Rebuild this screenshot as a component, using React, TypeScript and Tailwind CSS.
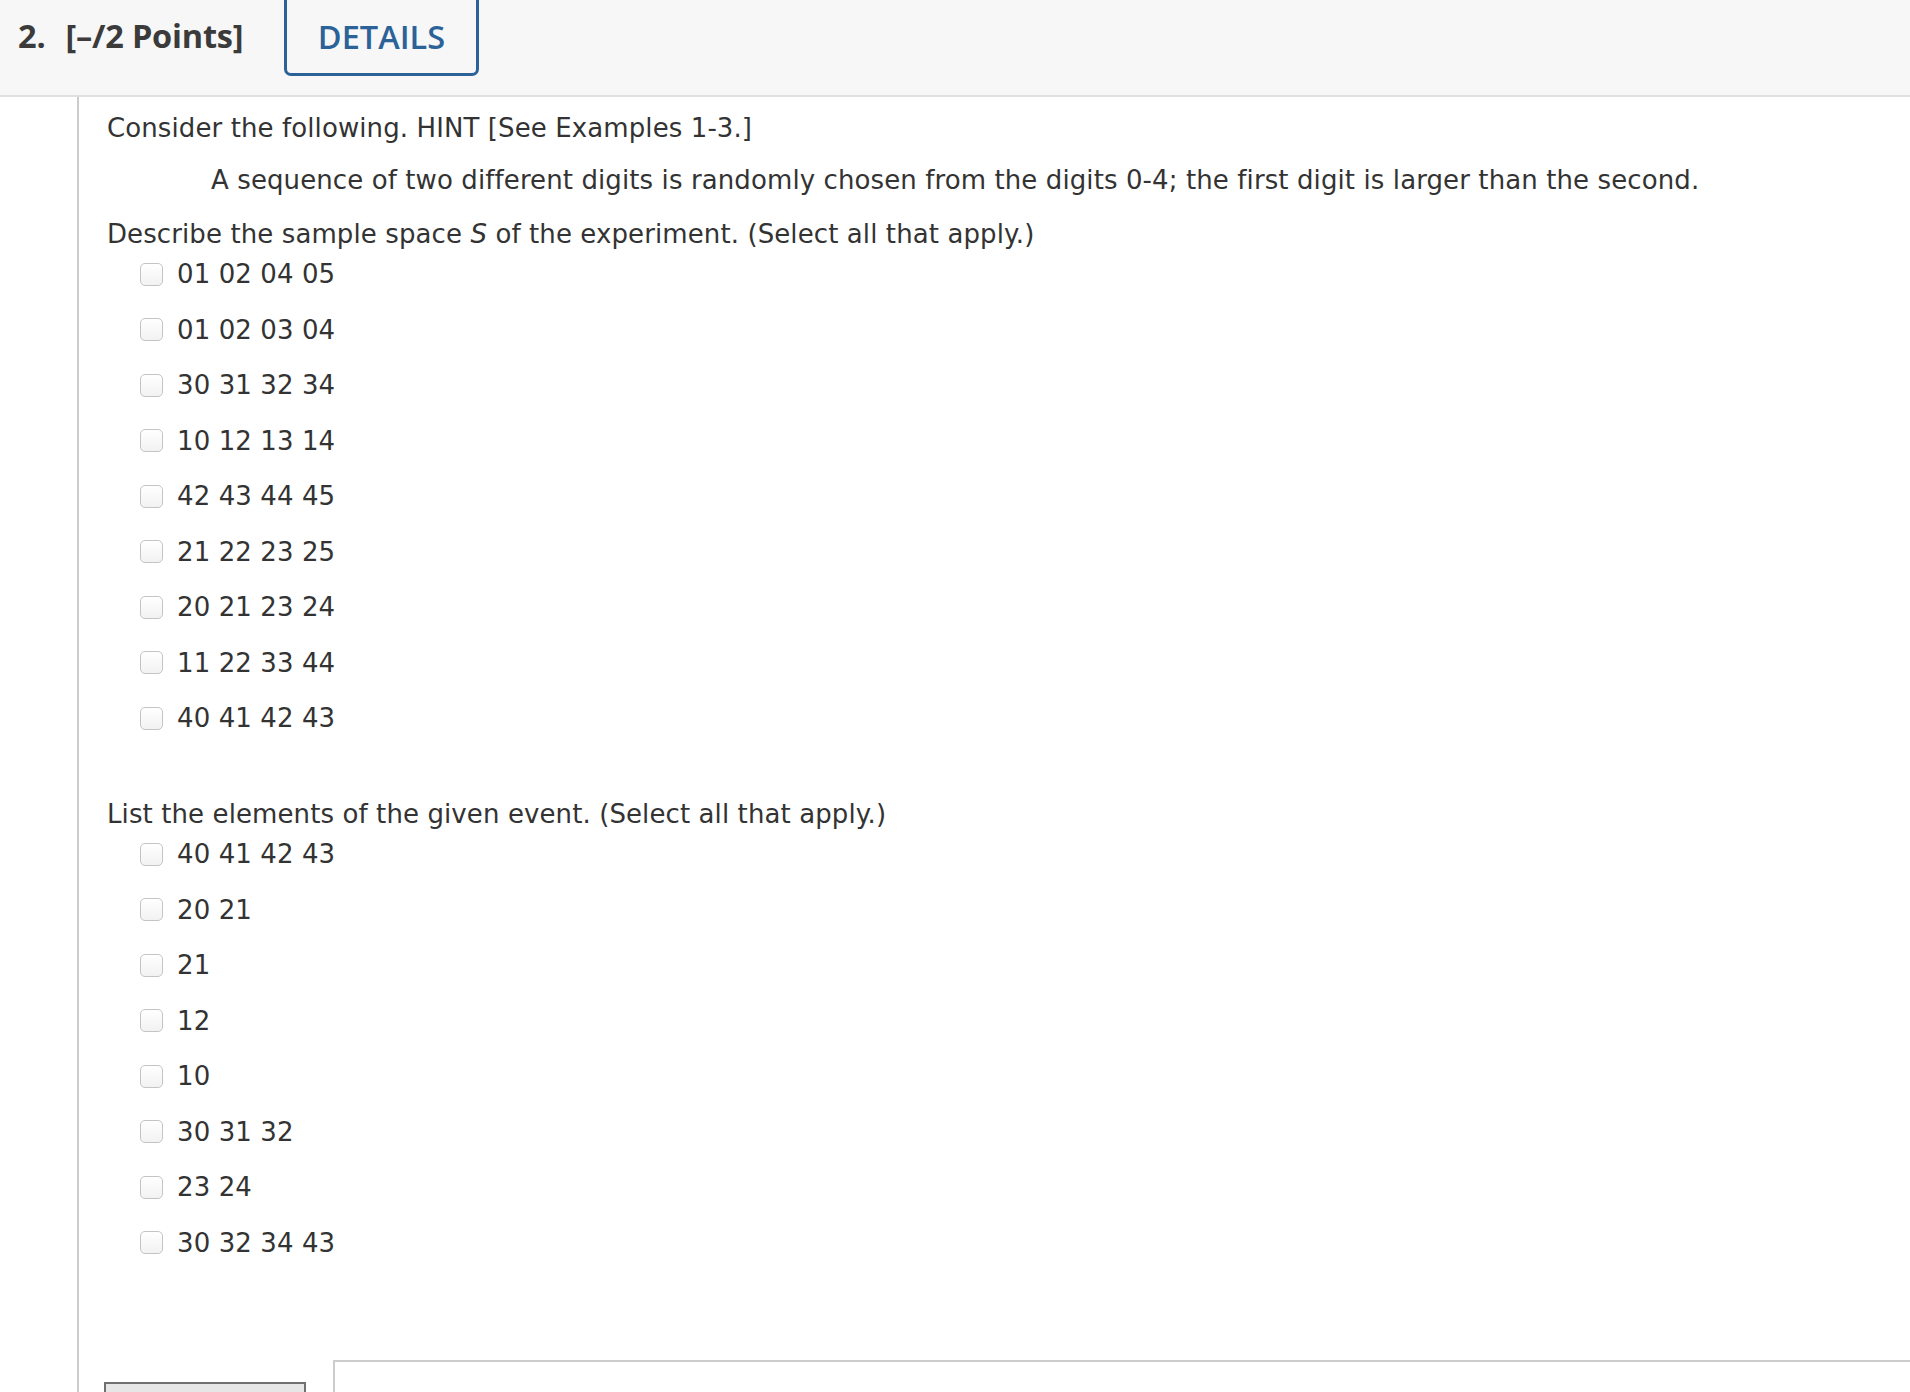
import React from 'react';

const sampleSpace = [
  '01 02 04 05',
  '01 02 03 04',
  '30 31 32 34',
  '10 12 13 14',
  '42 43 44 45',
  '21 22 23 25',
  '20 21 23 24',
  '11 22 33 44',
  '40 41 42 43',
];

const eventItems = ['40 41 42 43', '20 21', '21', '12', '10', '30 31 32', '23 24', '30 32 34 43'];

function Option({ label }: { label: string }) {
  return (
    <label className="flex h-[36px] items-center pl-[33px]">
      <span className="h-[23px] w-[23px] shrink-0 rounded-[5px] border-[1.5px] border-[#c4c4c4] bg-gradient-to-b from-white to-[#f2f2f2]" />
      <span className="ml-[14px] leading-[36px]">{label}</span>
    </label>
  );
}

export default function App() {
  return (
    <div className="min-h-[1392px] w-full overflow-hidden bg-white text-[#333]">
      {/* header */}
      <div className="flex h-[97px] items-start border-b-2 border-[#e0e0e0] bg-[#f7f7f7] font-['Open_Sans',sans-serif] text-[#3b3b3b]">
        <div className="flex h-[73px] w-[284px] shrink-0 items-center pl-[18px] text-[32.5px] font-bold tracking-[-0.2px]">
          <span>2.</span>
          <span className="ml-[20px]">[–/2 Points]</span>
        </div>
        <div className="-mt-[10px] flex h-[86px] w-[195px] items-center justify-center rounded-[7px] border-[3px] border-[#2b6298] pt-[8px] text-[32.5px] font-semibold text-[#2b6298]">
          DETAILS
        </div>
      </div>

      {/* body */}
      <div className="flex">
        <div className="w-[77px] shrink-0" />
        <div className="min-h-[1295px] flex-1 border-l-2 border-[#cccccc] pl-[28px] pt-[13px] font-['DejaVu_Sans',Verdana,sans-serif] text-[26px] leading-[36px] tracking-[0.1px]">
          <p>Consider the following. HINT [See Examples 1-3.]</p>
          <p className="mt-[16px] pl-[104px]">
            A sequence of two different digits is randomly chosen from the digits 0-4; the first digit is larger than the second.
          </p>
          <p className="mt-[18px]">
            Describe the sample space <i>S</i> of the experiment. (Select all that apply.)
          </p>
          <div className="mt-[4px] flex flex-col gap-[19.5px]">
            {sampleSpace.map((s, i) => (
              <Option key={i} label={s} />
            ))}
          </div>

          <p className="mt-[60px]">List the elements of the given event. (Select all that apply.)</p>
          <div className="mt-[4px] flex flex-col gap-[19.5px]">
            {eventItems.map((s, i) => (
              <Option key={i} label={s} />
            ))}
          </div>

          <div className="mt-[99px] flex items-start">
            <div className="-ml-[3px] mt-[22px] h-[40px] w-[202px] border-2 border-[#707070] bg-[#e6e6e6]" />
            <div className="ml-[27px] h-[60px] flex-1 border-l-2 border-t-2 border-[#cccccc]" />
          </div>
        </div>
      </div>
    </div>
  );
}
